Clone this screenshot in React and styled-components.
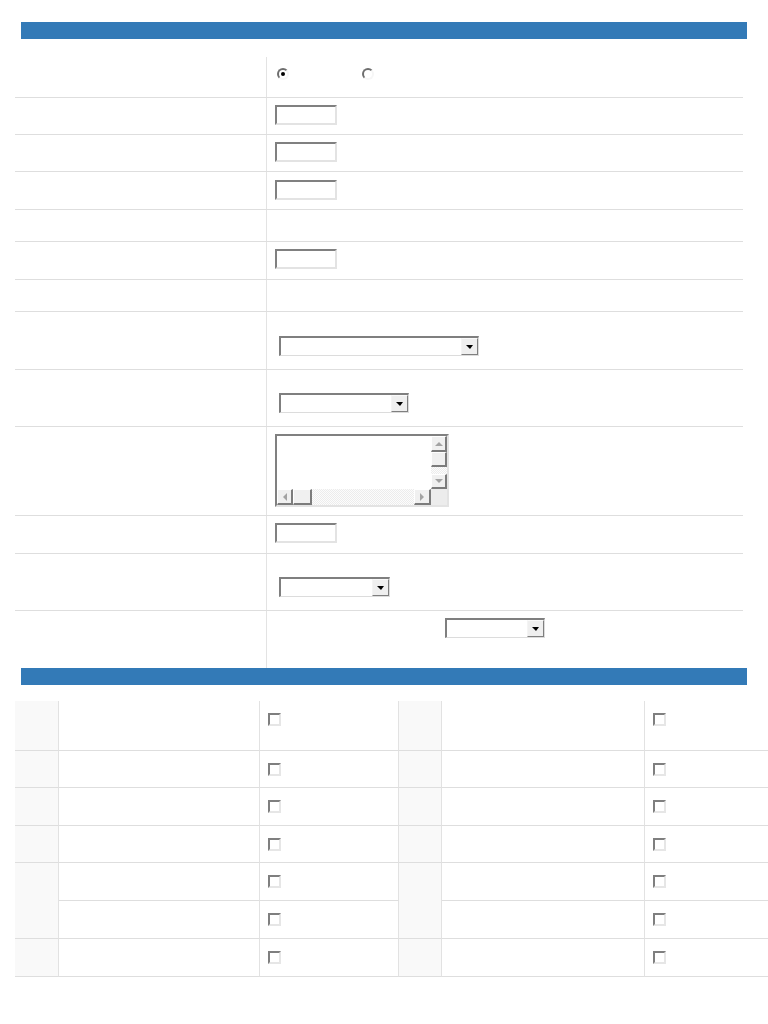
import React from "react";
import styled, { createGlobalStyle } from "styled-components";

const GlobalStyle = createGlobalStyle`
  html, body {
    margin: 0;
    padding: 0;
    background: #fff;
    overflow-x: hidden;
  }
  body {
    font-family: "Liberation Sans", Arial, sans-serif;
    font-size: 12px;
    color: #333;
  }
  * { box-sizing: border-box; }
`;

const Page = styled.div`
  width: 768px;
  padding: 22px 0 40px;
`;

const SectionBar = styled.div`
  margin: 0 21px;
  height: 17px;
  background: #337ab7;
`;

/* ---------- settings form ---------- */

const FormTable = styled.div`
  margin: 18px 0 0 15px;
  width: 728px;
`;

const FormRow = styled.div`
  display: grid;
  grid-template-columns: 252px 1fr;
  height: ${p => p.h}px;
  border-top: ${p => (p.first ? "none" : "1px solid #dedede")};
`;

const Label = styled.div`
  border-right: 1px solid #e3e3e3;
`;

const Value = styled.div`
  padding: ${p => p.pt}px 0 0 ${p => p.pl}px;
  display: flex;
  align-items: flex-start;
`;

const RadioGroup = styled.div`
  display: flex;
  gap: 73px;
`;

const Radio = styled.span`
  position: relative;
  display: inline-block;
  width: 12px;
  height: 12px;
  border-radius: 50%;
  border: 2px solid;
  border-color: #6e6e6e #f6f6f6 #f6f6f6 #6e6e6e;
  background: #fff;
  &::after {
    content: "";
    display: ${p => (p.checked ? "block" : "none")};
    position: absolute;
    left: 2px;
    top: 2px;
    width: 4px;
    height: 4px;
    border-radius: 50%;
    background: #000;
  }
`;

const TextInput = styled.input`
  width: 62px;
  height: 20px;
  margin: 0;
  padding: 0 2px;
  border: 2px solid;
  border-color: #808080 #e3e3e3 #e3e3e3 #808080;
  background: #fff;
  outline: none;
`;

const SelectBox = styled.div`
  display: flex;
  justify-content: flex-end;
  width: ${p => p.w}px;
  height: 20px;
  border-style: solid;
  border-width: 2px 1px 1px 2px;
  border-color: #7f7f7f #dcdcdc #dcdcdc #7f7f7f;
  background: #fff;
`;

const DropButton = styled.span`
  display: flex;
  align-items: center;
  justify-content: center;
  width: 17px;
  height: 100%;
  background: #efefef;
  border-style: solid;
  border-width: 1px;
  border-color: #fafafa #7f7f7f #7f7f7f #f4f4f4;
  &::before {
    content: "";
    border-left: 4px solid transparent;
    border-right: 3px solid transparent;
    border-top: 4px solid #000;
  }
`;

const TextArea = styled.div`
  display: grid;
  grid-template-columns: 1fr 16px;
  grid-template-rows: 1fr 16px;
  width: 174px;
  height: 73px;
  border: 2px solid;
  border-color: #808080 #e3e3e3 #e3e3e3 #808080;
  background: #fff;
`;

const ScrollV = styled.div`
  display: flex;
  flex-direction: column;
`;

const ScrollH = styled.div`
  display: flex;
`;

const ScrollBtn = styled.span`
  display: flex;
  align-items: center;
  justify-content: center;
  flex: 0 0 ${p => p.size}px;
  background: #f0f0f0;
  border-style: solid;
  border-width: 1px 2px 2px 1px;
  border-color: #fff #7c7c7c #7c7c7c #fff;
  &::before {
    content: "";
    ${p =>
      p.dir === "up" &&
      "border-left:4px solid transparent;border-right:4px solid transparent;border-bottom:4px solid #a3a3a3;"}
    ${p =>
      p.dir === "down" &&
      "border-left:4px solid transparent;border-right:4px solid transparent;border-top:4px solid #a3a3a3;"}
    ${p =>
      p.dir === "left" &&
      "border-top:4px solid transparent;border-bottom:4px solid transparent;border-right:4px solid #a3a3a3;"}
    ${p =>
      p.dir === "right" &&
      "border-top:4px solid transparent;border-bottom:4px solid transparent;border-left:4px solid #a3a3a3;"}
  }
`;

const Thumb = styled.span`
  flex: 0 0 ${p => p.size}px;
  background: #f0f0f0;
  border-style: solid;
  border-width: 1px 2px 2px 1px;
  border-color: #fff #7c7c7c #7c7c7c #fff;
`;

const Track = styled.span`
  flex: 1;
  background: repeating-conic-gradient(#ececec 0 25%, #fcfcfc 0 50%) 0 0 / 2px 2px;
`;

const Corner = styled.div`
  background: #ececec;
`;

/* ---------- permissions grid ---------- */

const CheckGrid = styled.div`
  display: grid;
  grid-template-columns: 44px 201px 139px 43px 203px 140px;
  grid-template-rows: 50px 37px 38px 37px 38px 38px 38px;
  margin: 16px 0 0 15px;
  width: 770px;
`;

const Cell = styled.div`
  grid-row: ${p => (p.span ? `span ${p.span}` : "auto")};
  padding: 12px 0 0 8px;
  background: ${p => (p.shade ? "#f9f9f9" : "#fff")};
  border-bottom: 1px solid #dedede;
  border-right: ${p => (p.edge ? "1px solid #e2e2e2" : "none")};
`;

const Check = styled.span`
  display: block;
  width: 13px;
  height: 13px;
  border: 2px solid;
  border-color: #7f7f7f #e6e6e6 #e6e6e6 #7f7f7f;
  background: #fff;
`;

const formRows = [
  { h: 40, pt: 11, pl: 10, kind: "radio" },
  { h: 37, pt: 7, pl: 8, kind: "input" },
  { h: 37, pt: 7, pl: 8, kind: "input" },
  { h: 38, pt: 8, pl: 8, kind: "input" },
  { h: 32, kind: "empty" },
  { h: 38, pt: 7, pl: 8, kind: "input" },
  { h: 32, kind: "empty" },
  { h: 58, pt: 24, pl: 12, kind: "select", w: 200 },
  { h: 57, pt: 23, pl: 12, kind: "select", w: 130 },
  { h: 89, pt: 7, pl: 8, kind: "textarea" },
  { h: 38, pt: 7, pl: 8, kind: "input" },
  { h: 57, pt: 23, pl: 12, kind: "select", w: 111 },
  { h: 58, pt: 7, pl: 178, kind: "select", w: 100 }
];

const renderField = row => {
  switch (row.kind) {
    case "radio":
      return (
        <RadioGroup>
          <Radio checked />
          <Radio />
        </RadioGroup>
      );
    case "input":
      return <TextInput type="text" />;
    case "select":
      return (
        <SelectBox w={row.w}>
          <DropButton />
        </SelectBox>
      );
    case "textarea":
      return (
        <TextArea>
          <div />
          <ScrollV>
            <ScrollBtn dir="up" size={16} />
            <Thumb size={15} />
            <Track />
            <ScrollBtn dir="down" size={15} />
          </ScrollV>
          <ScrollH>
            <ScrollBtn dir="left" size={16} />
            <Thumb size={19} />
            <Track />
            <ScrollBtn dir="right" size={17} />
          </ScrollH>
          <Corner />
        </TextArea>
      );
    default:
      return null;
  }
};

// rowspan of the shaded cells per row; 0 = covered by the cell above
const checkRows = [1, 1, 1, 1, 2, 0, 1];

const CheckRow = ({ span }) => (
  <>
    {span > 0 && <Cell shade edge span={span} />}
    <Cell edge />
    <Cell edge>
      <Check />
    </Cell>
    {span > 0 && <Cell shade edge span={span} />}
    <Cell edge />
    <Cell>
      <Check />
    </Cell>
  </>
);

export default function App() {
  return (
    <>
      <GlobalStyle />
      <Page>
        <SectionBar />
        <FormTable>
          {formRows.map((row, i) => (
            <FormRow key={i} h={row.h} first={i === 0}>
              <Label />
              <Value pt={row.pt || 0} pl={row.pl || 0}>
                {renderField(row)}
              </Value>
            </FormRow>
          ))}
        </FormTable>
        <SectionBar />
        <CheckGrid>
          {checkRows.map((span, i) => (
            <CheckRow key={i} span={span} />
          ))}
        </CheckGrid>
      </Page>
    </>
  );
}
